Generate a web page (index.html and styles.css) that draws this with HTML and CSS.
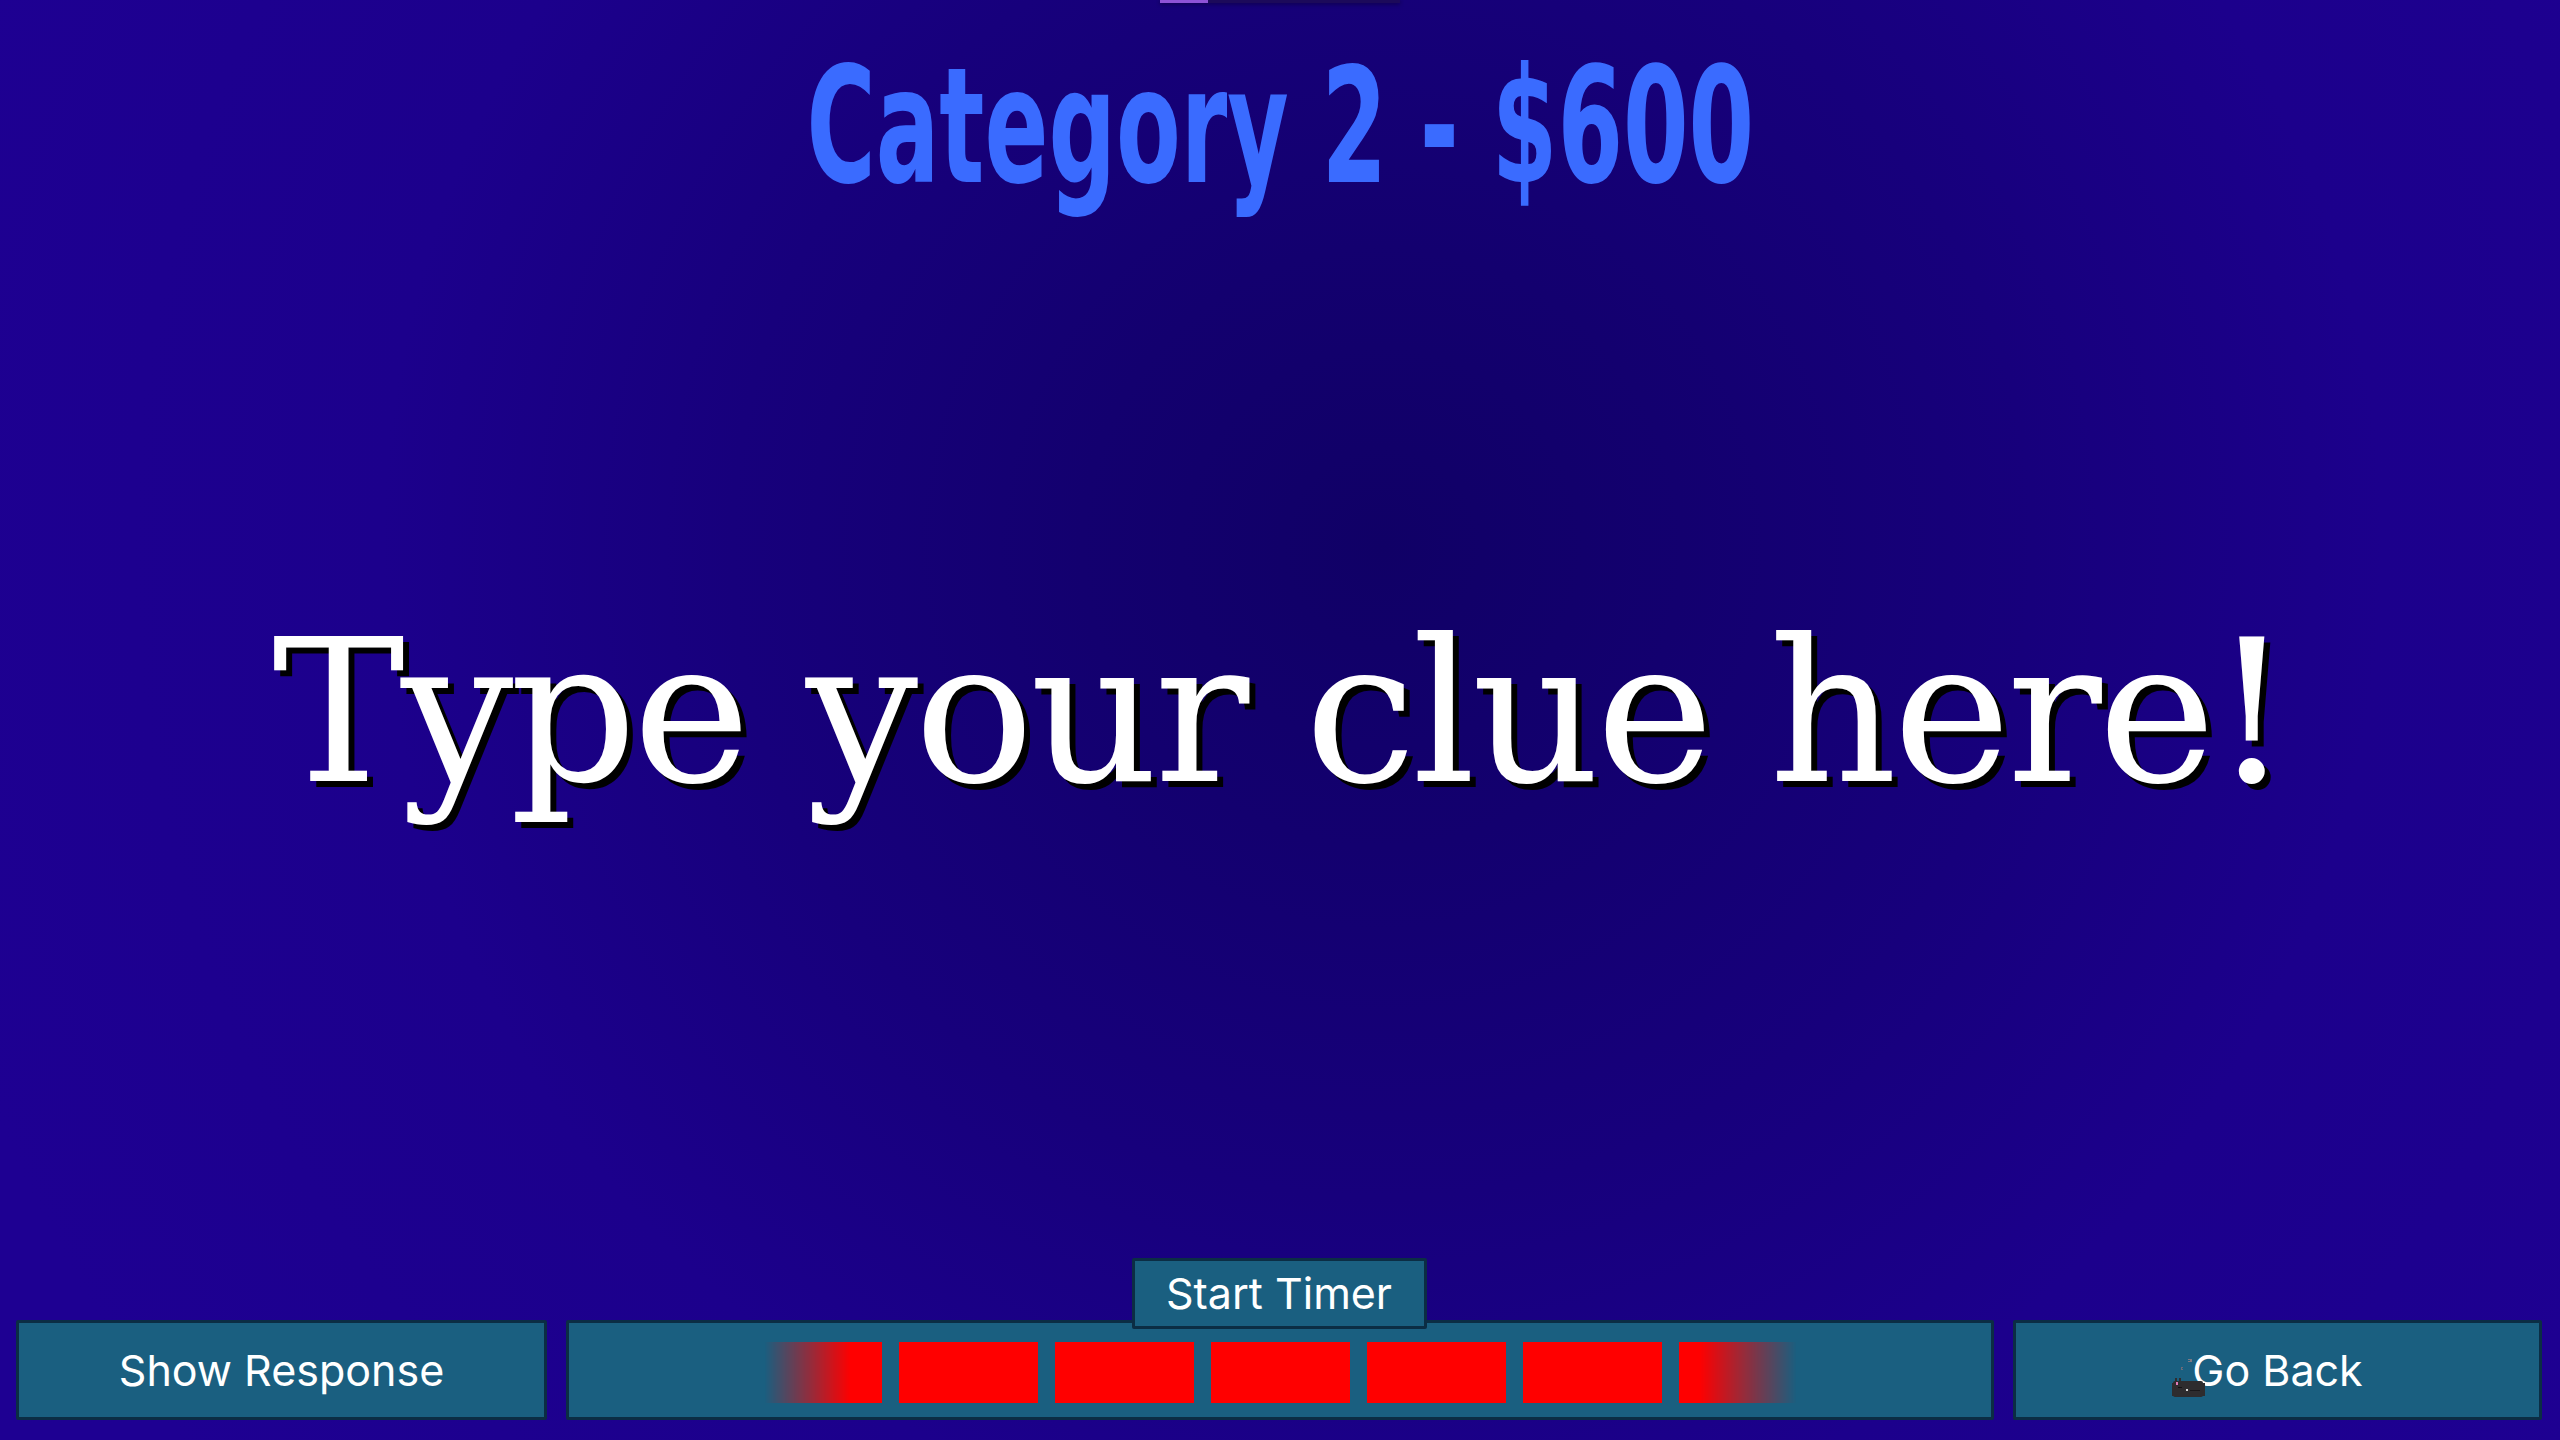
FILE: index.html
```html
<!DOCTYPE html>
<html lang="en">
<head>
<meta charset="utf-8">
<title>Category 2 - $600</title>
<link rel="stylesheet" href="styles.css">
</head>
<body>
<div class="screen">
  <div class="load-bar"><span class="load-fill"></span></div>

  <header class="heading">
    <h1 class="title"><span class="title-text">Category 2 - $600</span></h1>
  </header>

  <main class="clue">
    <p class="clue-text">Type your clue here!</p>
  </main>

  <footer class="controls">
    <button class="btn start-timer" type="button">Start Timer</button>
    <div class="controls-row">
      <button class="btn action" type="button">Show Response</button>
      <div class="timer">
        <div class="segments">
          <span class="seg"></span>
          <span class="seg"></span>
          <span class="seg"></span>
          <span class="seg"></span>
          <span class="seg"></span>
          <span class="seg"></span>
          <span class="seg"></span>
        </div>
      </div>
      <button class="btn action back" type="button">
        <svg class="pet" width="36" height="40" viewBox="0 0 36 40" aria-hidden="true">
          <!-- zzz -->
          <rect x="16" y="0" width="4" height="1" fill="#7a7a86"/>
          <rect x="18" y="1" width="2" height="1" fill="#7a7a86"/>
          <rect x="16" y="2" width="4" height="1" fill="#7a7a86"/>
          <rect x="9" y="8" width="2" height="1" fill="#6b6b78"/>
          <rect x="9" y="9" width="1" height="1" fill="#6b6b78"/>
          <rect x="9" y="10" width="2" height="1" fill="#6b6b78"/>
          <!-- sleeping cat -->
          <rect x="3" y="19" width="2" height="3" fill="#2e2c2e"/>
          <rect x="7" y="19" width="2" height="3" fill="#2e2c2e"/>
          <rect x="1" y="22" width="30" height="16" rx="2" fill="#2e2c2e"/>
          <rect x="0" y="24" width="33" height="13" fill="#2e2c2e"/>
          <rect x="4" y="23" width="2" height="3" fill="#e07ab8"/>
          <rect x="6" y="28" width="4" height="1" fill="#141214"/>
          <rect x="14" y="30" width="2" height="2" fill="#d8d8d8"/>
          <rect x="18" y="31" width="10" height="1" fill="#1a181a"/>
        </svg>
        Go Back
      </button>
    </div>
  </footer>
</div>
</body>
</html>
```

FILE: styles.css
```css
* {
  box-sizing: border-box;
}

html,
body {
  margin: 0;
  height: 100%;
}

body {
  background: radial-gradient(circle at 54% 38%, #100066 0, #13006f 300px, #17007c 650px, #1c008c 1000px, #1e0092 1500px);
  color: #ffffff;
  overflow: hidden;
}

.screen {
  position: relative;
  height: 100vh;
  display: flex;
  flex-direction: column;
}

/* thin loading strip pinned to the top edge */
.load-bar {
  position: absolute;
  top: 0;
  left: 1160px;
  width: 240px;
  height: 3px;
  background: #1c0a5a;
  box-shadow: 0 1px 4px rgba(0, 0, 0, 0.45);
}

.load-fill {
  display: block;
  width: 48px;
  height: 100%;
  background: #8d52d6;
}

.heading {
  display: flex;
  justify-content: center;
  padding-top: 37px;
}

.title {
  margin: 0;
  font-family: "DejaVu Sans", sans-serif;
  font-stretch: condensed;
  font-weight: 700;
  font-size: 160px;
  line-height: 180px;
  color: #3a6bff;
  letter-spacing: 0;
}

.title-text {
  display: inline-block;
  transform: scaleX(0.655);
  white-space: nowrap;
}

.clue {
  flex: 1;
  display: flex;
  align-items: center;
  justify-content: center;
  padding-bottom: 50px;
}

.clue-text {
  margin: 0;
  font-family: "DejaVu Serif", serif;
  font-size: 199px;
  letter-spacing: -4px;
  line-height: 1.2;
  color: #ffffff;
  text-shadow: 6px 6px 0 #000000;
  white-space: nowrap;
}

.controls {
  display: flex;
  flex-direction: column;
  align-items: center;
  padding: 0 18px 20px 16px;
}

.btn {
  font-family: "Inter", "Noto Sans", sans-serif;
  color: #ffffff;
  background: #1a5f80;
  border: 3px solid #0b2d44;
  border-radius: 2px;
  padding: 0;
  margin: 0;
  cursor: pointer;
}

.start-timer {
  position: relative;
  z-index: 1;
  width: 295px;
  height: 71px;
  margin-bottom: -9px;
  font-size: 43px;
  line-height: 1;
}

.controls-row {
  width: 100%;
  display: grid;
  grid-template-columns: 531px 1fr 529px;
  column-gap: 19px;
  height: 100px;
}

.action {
  position: relative;
  height: 100%;
  font-size: 43px;
  line-height: 1;
}

.timer {
  height: 100%;
  background: #1a5f80;
  border: 3px solid #0b2d44;
  border-radius: 2px;
  display: flex;
  align-items: center;
  justify-content: center;
  padding-top: 4px;
}

.segments {
  display: flex;
  gap: 17px;
  -webkit-mask-image: linear-gradient(to right, transparent 2%, #000 10%, #000 89%, transparent 98%);
  mask-image: linear-gradient(to right, transparent 2%, #000 10%, #000 89%, transparent 98%);
}

.seg {
  width: 139px;
  height: 61px;
  background: #ff0000;
}

/* small sleeping pet resting on the back button */
.pet {
  position: absolute;
  left: 156px;
  top: 36px;
}
```
